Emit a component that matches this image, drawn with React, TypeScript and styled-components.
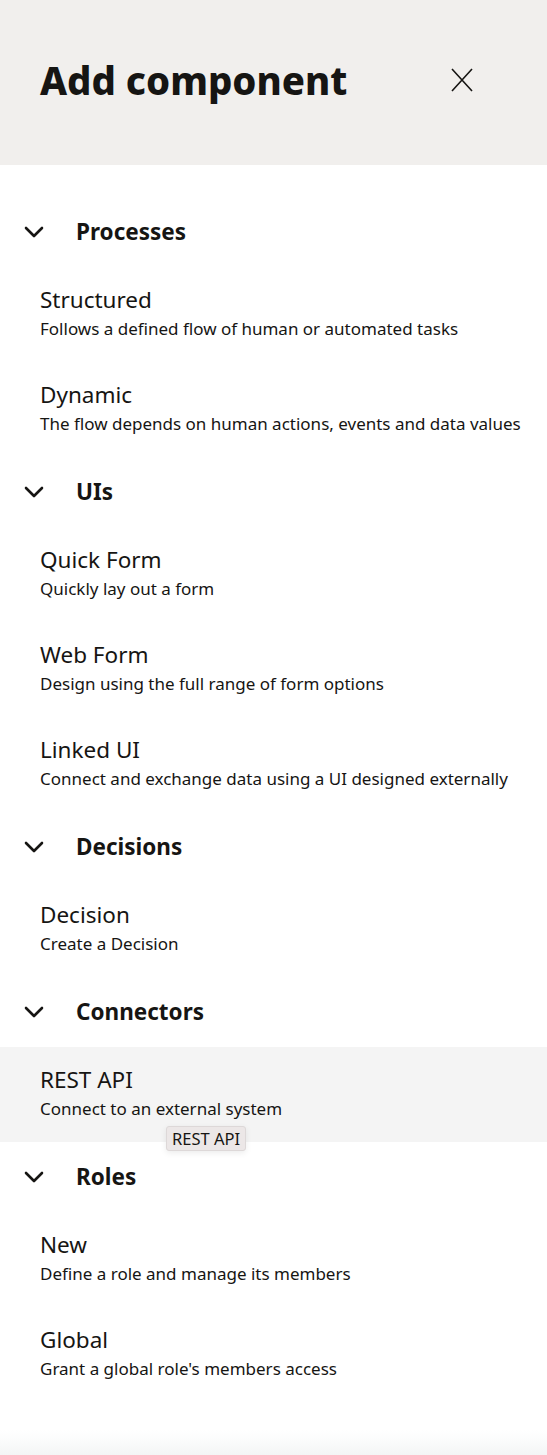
import React from "react";
import styled, { createGlobalStyle } from "styled-components";

const Global = createGlobalStyle`
  html, body { margin: 0; padding: 0; background: #ffffff; }
  body { font-family: "Noto Sans", "Open Sans", sans-serif; color: #161513; }
  * { box-sizing: border-box; }
`;

const Panel = styled.div`
  width: 547px;
  min-height: 1455px;
  display: flex;
  flex-direction: column;
  background: #ffffff;
`;

const Header = styled.header`
  height: 165px;
  background: #f1efed;
  display: flex;
  align-items: flex-start;
  justify-content: space-between;
  padding: 56px 0 0 40px;
`;

const Title = styled.h1`
  margin: 0;
  font-size: 38.3px;
  line-height: 48px;
  font-weight: 800;
  letter-spacing: 0;
`;

const CloseButton = styled.button`
  width: 44px;
  height: 44px;
  margin: 2px 63px 0 0;
  border: none;
  background: transparent;
  padding: 0;
  display: flex;
  align-items: center;
  justify-content: center;
  color: #161513;
  cursor: pointer;
`;

const List = styled.div`
  padding-top: 32px;
  display: flex;
  flex-direction: column;
`;

const SectionHeader = styled.div`
  height: 70px;
  display: flex;
  align-items: center;
  padding-left: 24px;
  gap: 32px;
`;

const SectionTitle = styled.h2`
  margin: 0;
  font-size: 22.5px;
  line-height: 30px;
  font-weight: 700;
`;

const Item = styled.div<{ $hover?: boolean }>`
  position: relative;
  height: 95px;
  padding: 18px 0 0 40px;
  background: ${(p) => (p.$hover ? "#f4f4f4" : "transparent")};
`;

const ItemTitle = styled.div`
  font-size: 22.5px;
  line-height: 30px;
  font-weight: 400;
`;

const ItemDesc = styled.div`
  margin-top: 2px;
  font-size: 17px;
  line-height: 24px;
  font-weight: 400;
`;

const Tooltip = styled.div`
  position: absolute;
  left: 166px;
  top: 79px;
  height: 25px;
  padding: 0 5px;
  display: flex;
  align-items: center;
  font-size: 16.5px;
  background: #ece7e7;
  border: 1px solid #ddd8d8;
  border-radius: 3px;
  box-shadow: 0 2px 6px rgba(0, 0, 0, 0.08);
  color: #161513;
  z-index: 2;
`;

const Spacer = styled.div`
  flex: 1;
  min-height: 28px;
`;

const FooterFade = styled.div`
  height: 25px;
  background: linear-gradient(to bottom, #ffffff 0%, #fbfcfc 40%, #f3f5f5 100%);
`;

const Chevron = () => (
  <svg width="20" height="12" viewBox="0 0 20 12" fill="none">
    <polyline points="2,2 10,10 18,2" stroke="#161513" strokeWidth="2.6" strokeLinecap="round" strokeLinejoin="round" />
  </svg>
);

const CloseIcon = () => (
  <svg width="24" height="24" viewBox="0 0 24 24" fill="none">
    <path d="M2 1 L22 23 M22 1 L2 23" stroke="#161513" strokeWidth="1.6" />
  </svg>
);

type Entry = { title: string; desc: string; hover?: boolean };
type Section = { name: string; items: Entry[] };

const sections: Section[] = [
  {
    name: "Processes",
    items: [
      { title: "Structured", desc: "Follows a defined flow of human or automated tasks" },
      { title: "Dynamic", desc: "The flow depends on human actions, events and data values" },
    ],
  },
  {
    name: "UIs",
    items: [
      { title: "Quick Form", desc: "Quickly lay out a form" },
      { title: "Web Form", desc: "Design using the full range of form options" },
      { title: "Linked UI", desc: "Connect and exchange data using a UI designed externally" },
    ],
  },
  {
    name: "Decisions",
    items: [{ title: "Decision", desc: "Create a Decision" }],
  },
  {
    name: "Connectors",
    items: [{ title: "REST API", desc: "Connect to an external system", hover: true }],
  },
  {
    name: "Roles",
    items: [
      { title: "New", desc: "Define a role and manage its members" },
      { title: "Global", desc: "Grant a global role's members access" },
    ],
  },
];

export default function App() {
  return (
    <>
      <Global />
      <Panel>
        <Header>
          <Title>Add component</Title>
          <CloseButton aria-label="Close">
            <CloseIcon />
          </CloseButton>
        </Header>
        <List>
          {sections.map((s) => (
            <React.Fragment key={s.name}>
              <SectionHeader>
                <Chevron />
                <SectionTitle>{s.name}</SectionTitle>
              </SectionHeader>
              {s.items.map((it) => (
                <Item key={it.title} $hover={it.hover}>
                  <ItemTitle>{it.title}</ItemTitle>
                  <ItemDesc>{it.desc}</ItemDesc>
                  {it.hover && <Tooltip>{it.title}</Tooltip>}
                </Item>
              ))}
            </React.Fragment>
          ))}
        </List>
        <Spacer />
        <FooterFade />
      </Panel>
    </>
  );
}
